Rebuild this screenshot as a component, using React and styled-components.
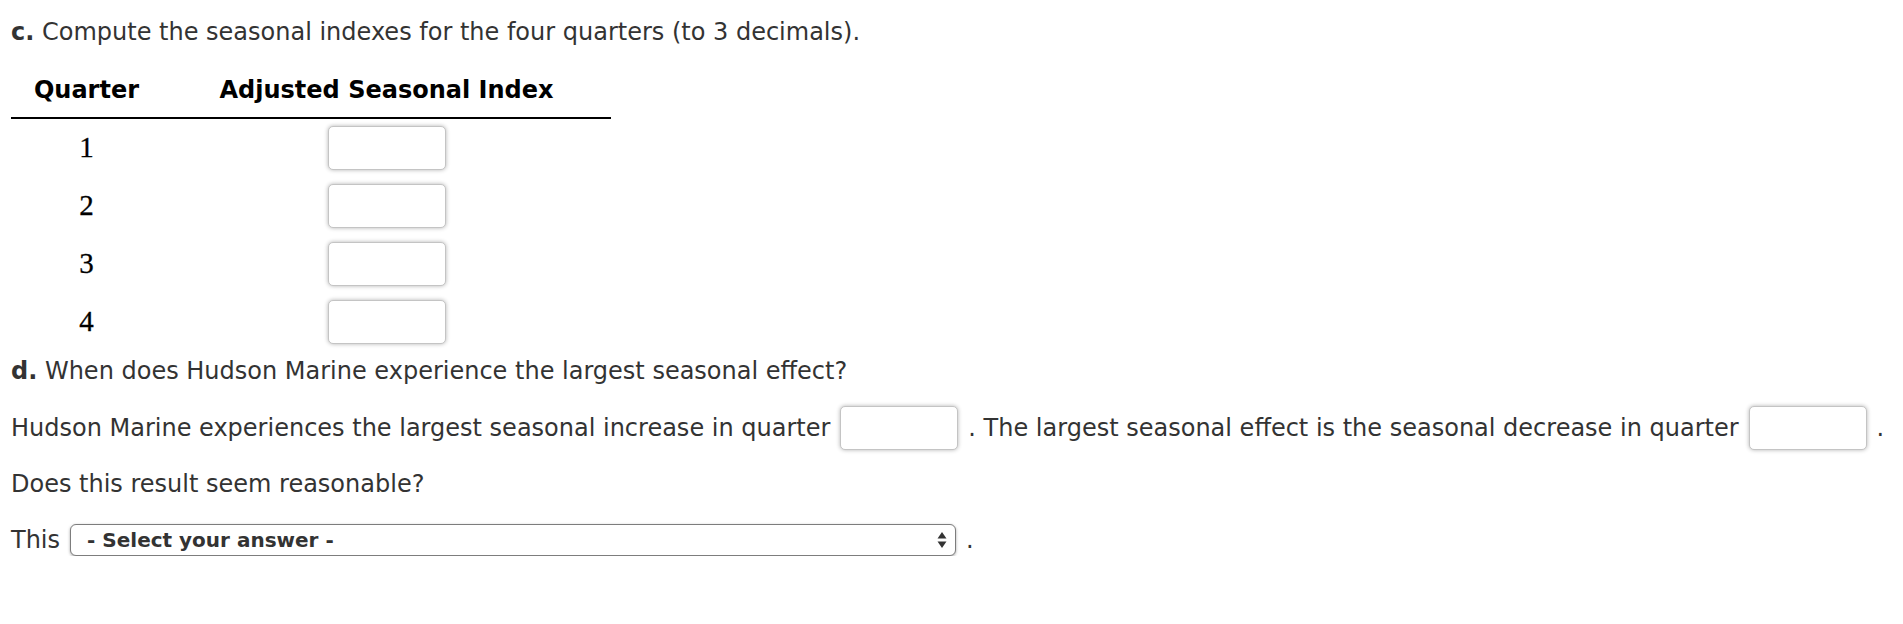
import React from "react";
import styled, { createGlobalStyle } from "styled-components";

const GlobalStyle = createGlobalStyle`
  body {
    margin: 0;
    background: #fff;
  }
`;

const Page = styled.div`
  padding: 0 11px;
  font-family: "DejaVu Sans", Verdana, sans-serif;
  font-size: 24px;
  line-height: 30px;
  color: #333;
`;

const Para = styled.p`
  margin: 0;
  padding-top: ${(p) => p.$top || 0}px;
  display: flex;
  align-items: center;
  white-space: pre;
`;

const Label = styled.b`
  font-weight: bold;
`;

const Table = styled.table`
  border-collapse: collapse;
  margin-top: 28px;
  width: 600px;
`;

const HeadCell = styled.th`
  font-weight: bold;
  color: #000;
  text-align: center;
  width: ${(p) => p.$width}px;
  height: 30px;
  padding: 0 0 12px;
  border-bottom: 2px solid #000;
  vertical-align: bottom;
`;

const Cell = styled.td`
  text-align: center;
  height: 58px;
  padding: 0;
`;

const Num = styled.span`
  font-family: "Liberation Serif", "Times New Roman", serif;
  font-size: 29px;
  color: #000;
  -webkit-text-stroke: 0.3px #000;
`;

const Box = styled.input`
  box-sizing: border-box;
  width: 118px;
  height: 44px;
  border: 1px solid #c4c4c4;
  border-radius: 5px;
  box-shadow: 0 0 4px rgba(0, 0, 0, 0.3);
  background: #fff;
  vertical-align: middle;
  margin: ${(p) => p.$margin || "0"};
  padding: 0 6px;
  font: inherit;
`;

const SelectWrap = styled.span`
  position: relative;
  display: inline-block;
  height: 32px;
  margin: 0 10px 0 10px;
`;

const Select = styled.select`
  appearance: none;
  box-sizing: border-box;
  width: 886px;
  height: 32px;
  border: 1px solid #7d7d7d;
  border-radius: 6px;
  box-shadow: 0 1px 3px rgba(0, 0, 0, 0.35);
  background: #fff;
  padding: 0 0 0 16px;
  font-family: "DejaVu Sans", Verdana, sans-serif;
  font-size: 20px;
  font-weight: bold;
  color: #333;
`;

const Arrows = styled.svg`
  position: absolute;
  right: 9px;
  top: 8px;
  pointer-events: none;
`;

const rows = [1, 2, 3, 4];

export default function App() {
  return (
    <>
      <GlobalStyle />
      <Page>
        <Para $top={17}>
          <Label>c.</Label> Compute the seasonal indexes for the four quarters
          (to 3 decimals).
        </Para>
        <Table>
          <thead>
            <tr>
              <HeadCell $width={151}>Quarter</HeadCell>
              <HeadCell $width={449}>Adjusted Seasonal Index</HeadCell>
            </tr>
          </thead>
          <tbody>
            {rows.map((q) => (
              <tr key={q}>
                <Cell>
                  <Num>{q}</Num>
                </Cell>
                <Cell>
                  <Box type="text" />
                </Cell>
              </tr>
            ))}
          </tbody>
        </Table>
        <Para $top={5}>
          <Label>d.</Label> When does Hudson Marine experience the largest
          seasonal effect?
        </Para>
        <Para $top={20}>
          Hudson Marine experiences the largest seasonal increase in quarter
          <Box type="text" $margin="0 10px 0 10px" />. The largest seasonal
          effect is the seasonal decrease in quarter
          <Box type="text" $margin="0 10px 0 10px" />.
        </Para>
        <Para $top={19}>Does this result seem reasonable?</Para>
        <Para $top={25}>
          This
          <SelectWrap>
            <Select defaultValue="">
              <option value="">- Select your answer -</option>
              <option value="yes">result seems reasonable</option>
              <option value="no">result does not seem reasonable</option>
            </Select>
            <Arrows width="10" height="16" viewBox="0 0 10 16">
              <path d="M5 0 L9.5 6.5 L0.5 6.5 Z" fill="#333" />
              <path d="M5 16 L9.5 9.5 L0.5 9.5 Z" fill="#333" />
            </Arrows>
          </SelectWrap>
          .
        </Para>
      </Page>
    </>
  );
}
